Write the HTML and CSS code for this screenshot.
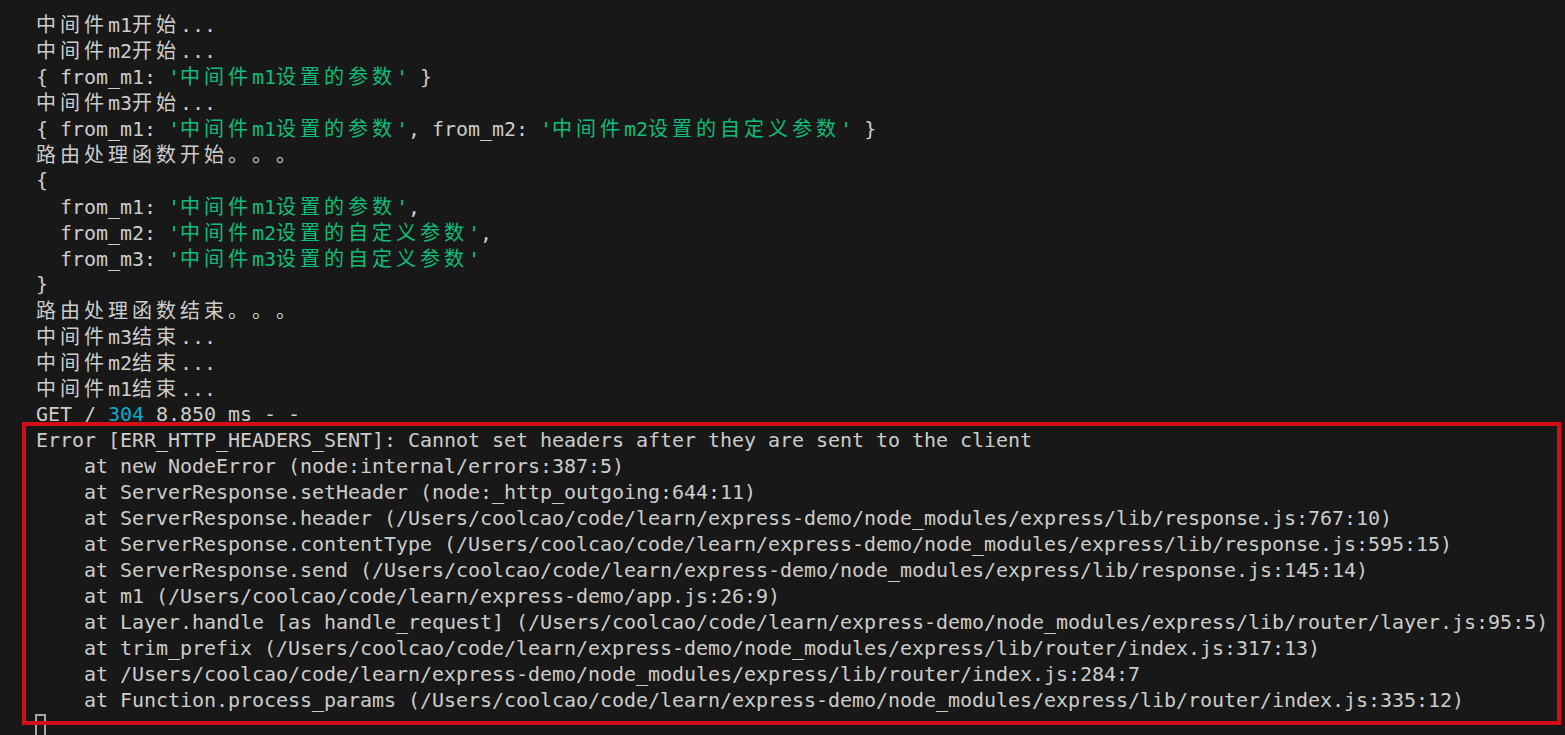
FILE: index.html
```html
<!DOCTYPE html>
<html lang="zh">
<head>
<meta charset="utf-8">
<title>Terminal</title>
<link rel="stylesheet" href="styles.css">
</head>
<body>
<main class="term">
<div class="line"><span class="cjk">中间件</span>m1<span class="cjk">开始</span>...</div>
<div class="line"><span class="cjk">中间件</span>m2<span class="cjk">开始</span>...</div>
<div class="line">{ from_m1: <span class="str">'<span class="cjk">中间件</span>m1<span class="cjk">设置的参数</span>'</span> }</div>
<div class="line"><span class="cjk">中间件</span>m3<span class="cjk">开始</span>...</div>
<div class="line">{ from_m1: <span class="str">'<span class="cjk">中间件</span>m1<span class="cjk">设置的参数</span>'</span>, from_m2: <span class="str">'<span class="cjk">中间件</span>m2<span class="cjk">设置的自定义参数</span>'</span> }</div>
<div class="line"><span class="cjk">路由处理函数开始。。。</span></div>
<div class="line">{</div>
<div class="line">  from_m1: <span class="str">'<span class="cjk">中间件</span>m1<span class="cjk">设置的参数</span>'</span>,</div>
<div class="line">  from_m2: <span class="str">'<span class="cjk">中间件</span>m2<span class="cjk">设置的自定义参数</span>'</span>,</div>
<div class="line">  from_m3: <span class="str">'<span class="cjk">中间件</span>m3<span class="cjk">设置的自定义参数</span>'</span></div>
<div class="line">}</div>
<div class="line"><span class="cjk">路由处理函数结束。。。</span></div>
<div class="line"><span class="cjk">中间件</span>m3<span class="cjk">结束</span>...</div>
<div class="line"><span class="cjk">中间件</span>m2<span class="cjk">结束</span>...</div>
<div class="line"><span class="cjk">中间件</span>m1<span class="cjk">结束</span>...</div>
<div class="line">GET / <span class="num">304</span> 8.850 ms - -</div>
<div class="err">
<div class="line">Error [ERR_HTTP_HEADERS_SENT]: Cannot set headers after they are sent to the client</div>
<div class="line">    at new NodeError (node:internal/errors:387:5)</div>
<div class="line">    at ServerResponse.setHeader (node:_http_outgoing:644:11)</div>
<div class="line">    at ServerResponse.header (/Users/coolcao/code/learn/express-demo/node_modules/express/lib/response.js:767:10)</div>
<div class="line">    at ServerResponse.contentType (/Users/coolcao/code/learn/express-demo/node_modules/express/lib/response.js:595:15)</div>
<div class="line">    at ServerResponse.send (/Users/coolcao/code/learn/express-demo/node_modules/express/lib/response.js:145:14)</div>
<div class="line">    at m1 (/Users/coolcao/code/learn/express-demo/app.js:26:9)</div>
<div class="line">    at Layer.handle [as handle_request] (/Users/coolcao/code/learn/express-demo/node_modules/express/lib/router/layer.js:95:5)</div>
<div class="line">    at trim_prefix (/Users/coolcao/code/learn/express-demo/node_modules/express/lib/router/index.js:317:13)</div>
<div class="line">    at /Users/coolcao/code/learn/express-demo/node_modules/express/lib/router/index.js:284:7</div>
<div class="line">    at Function.process_params (/Users/coolcao/code/learn/express-demo/node_modules/express/lib/router/index.js:335:12)</div>
</div>
<div class="line"><span class="cursor"></span></div>
</main>
</body>
</html>
```

FILE: styles.css
```css
html, body {
  margin: 0;
  padding: 0;
  height: 100%;
  overflow: hidden;
  background: #181818;
}

.term {
  padding: 11px 0 0 36px;
  font-family: "DejaVu Sans Mono", "Noto Sans CJK SC", monospace;
  font-size: 20px;
  letter-spacing: -0.04px;
  color: #cccccc;
}

.line {
  height: 26px;
  line-height: 26px;
  white-space: pre;
}

.cjk {
  font-family: "Noto Sans CJK SC", sans-serif;
  letter-spacing: 4px;
  text-spacing-trim: space-all;
  font-feature-settings: "halt" 0, "chws" 0;
}

.str {
  color: #10bc79;
}

.num {
  color: #11a8cd;
}

.err {
  position: relative;
}

.err::before {
  content: "";
  position: absolute;
  top: -5px;
  left: -14px;
  right: 4px;
  bottom: -12px;
  border: 4px solid #d20f18;
  pointer-events: none;
}

.cursor {
  display: inline-block;
  width: 11px;
  height: 24px;
  border: 2px solid #a8a8a8;
  box-sizing: border-box;
  vertical-align: top;
  margin-top: 1px;
  margin-left: -1px;
}
```
